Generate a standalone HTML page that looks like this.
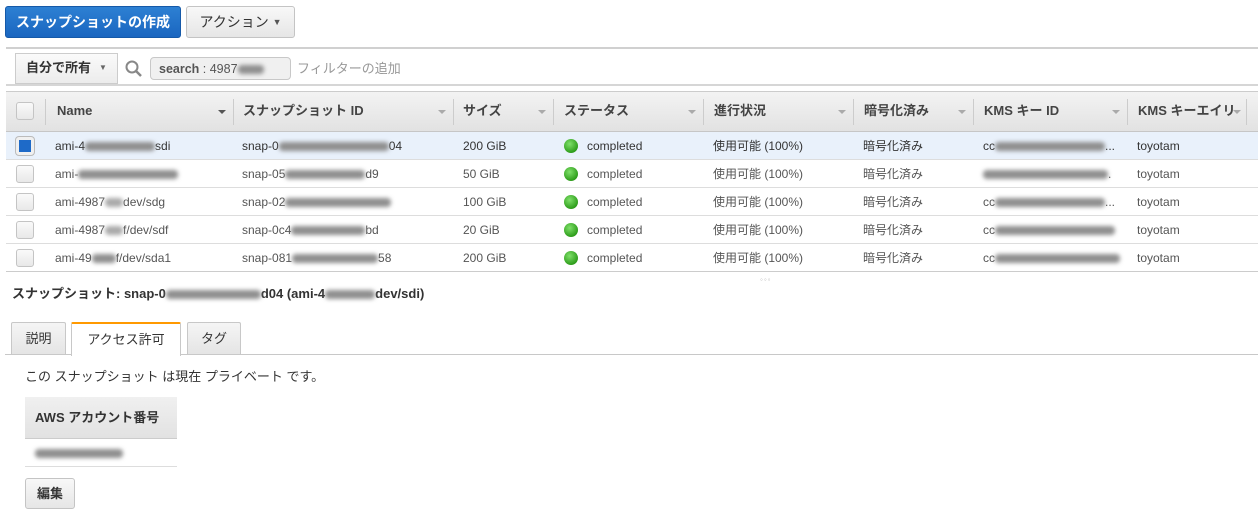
<!DOCTYPE html>
<html><head><meta charset="utf-8"><style>
*{box-sizing:border-box;margin:0;padding:0}
body{width:1258px;height:526px;background:#fff;font-family:"Liberation Sans","Noto Sans CJK JP",sans-serif;font-size:12px;color:#333;position:relative;overflow:hidden;line-height:16px}
.a{position:absolute;white-space:nowrap;height:16px;line-height:16px;display:flex;align-items:center}
.btn{position:absolute;border-radius:3px;font-weight:bold;font-size:13px;display:flex;align-items:center;justify-content:center;line-height:16px}
.blur{display:inline-block;height:9px;background:#8f8f8f;filter:blur(2.2px);border-radius:4px}
.hdr{position:absolute;left:6px;top:91px;width:1252px;height:41px;background:linear-gradient(#f3f3f3,#e2e2e2);border-top:1px solid #ccc;border-bottom:1px solid #c6c6c6}
.sep{position:absolute;top:99px;width:1px;height:26px;background:#ccc}
.ht{position:absolute;top:103px;height:16px;line-height:16px;display:flex;align-items:center;font-weight:bold;font-size:13px;color:#444;white-space:nowrap}
.tri{position:absolute;top:110px;width:0;height:0;border-left:4px solid transparent;border-right:4px solid transparent;border-top:4px solid #777}
.row{position:absolute;left:6px;width:1252px;height:28px;border-bottom:1px solid #ddd}
.cb{position:absolute;left:16px;width:18px;height:18px;border:1px solid #c4c4c4;border-radius:3px;background:linear-gradient(#fafafa,#e8e8e8)}
.dot{position:absolute;width:14px;height:14px;border-radius:50%;background:radial-gradient(circle at 40% 35%,#7fe06a,#2f9e1c 70%,#23810f)}
.tab{position:absolute;top:322px;height:33px;border:1px solid #c8c8c8;border-bottom:none;background:linear-gradient(#f5f5f5,#e4e4e4);font-size:13px;display:flex;align-items:center;justify-content:center;border-radius:2px 2px 0 0}
.g{color:#555}
</style></head><body>
<div class="btn" style="left:5px;top:6px;width:176px;height:32px;background:linear-gradient(#2d80d3,#1a66c0);border:1px solid #1559a8;color:#fff;font-size:14px">スナップショットの作成</div>
<div class="btn" style="left:186px;top:6px;width:109px;height:32px;background:linear-gradient(#f8f8f8,#e6e6e6);border:1px solid #c4c4c4;color:#333;font-weight:normal;font-size:14px">アクション&nbsp;<span style="font-size:9px;color:#555">▼</span></div>
<div class="a" style="left:6px;top:47px;width:1252px;height:2px;background:#d0d0d0"></div>
<div class="a" style="left:15px;top:53px;width:103px;height:31px;border:1px solid #ccc;background:linear-gradient(#fafafa,#ececec)"></div>
<div class="a" style="left:26px;top:60px;font-weight:bold;font-size:13px">自分で所有 <span style="font-size:8px;color:#666;margin-left:8px">▼</span></div>
<svg class="a" style="left:124px;top:59px;height:20px" width="20" height="20" viewBox="0 0 20 20"><circle cx="8" cy="8" r="5.5" fill="none" stroke="#888" stroke-width="2"/><line x1="12" y1="12" x2="17" y2="17" stroke="#888" stroke-width="2.5"/></svg>
<div class="a" style="left:150px;top:57px;width:141px;height:23px;border:1px solid #c8c8c8;border-radius:4px;background:#f0f0f0"></div>
<div class="a" style="left:159px;top:61px;font-weight:bold;color:#555;font-size:12.5px">search&nbsp;<span style="font-weight:normal">: 4987</span><span class="blur" style="width:26px"></span></div>
<div class="a" style="left:297px;top:61px;color:#999;font-size:13px">フィルターの追加</div>
<div class="a" style="left:6px;top:84px;width:1252px;height:2px;background:#d6d6d6"></div>
<div class="hdr"></div>
<div class="cb" style="top:102px"></div>
<div class="sep" style="left:45px"></div><div class="sep" style="left:233px"></div><div class="sep" style="left:453px"></div><div class="sep" style="left:553px"></div><div class="sep" style="left:703px"></div><div class="sep" style="left:853px"></div><div class="sep" style="left:973px"></div><div class="sep" style="left:1127px"></div><div class="sep" style="left:1246px"></div>
<div class="ht" style="left:57px">Name</div><div class="ht" style="left:243px">スナップショット ID</div><div class="ht" style="left:463px">サイズ</div><div class="ht" style="left:564px">ステータス</div><div class="ht" style="left:714px">進行状況</div><div class="ht" style="left:864px">暗号化済み</div><div class="ht" style="left:984px">KMS キー ID</div><div class="ht" style="left:1138px">KMS キーエイリ</div>
<div class="tri" style="left:218px;border-top-color:#555"></div><div class="tri" style="left:438px;border-top-color:#aaa"></div><div class="tri" style="left:538px;border-top-color:#aaa"></div><div class="tri" style="left:688px;border-top-color:#aaa"></div><div class="tri" style="left:838px;border-top-color:#aaa"></div><div class="tri" style="left:958px;border-top-color:#aaa"></div><div class="tri" style="left:1112px;border-top-color:#aaa"></div><div class="tri" style="left:1233px;border-top-color:#aaa"></div>

<div class="row" style="top:132px;background:#e9f1fb"></div>
<div class="row" style="top:160px"></div>
<div class="row" style="top:188px"></div>
<div class="row" style="top:216px"></div>
<div class="row" style="top:244px;border-bottom:1px solid #ccc"></div>

<div class="cb" style="top:137px;background:#1e6ac8;border:3px solid #f0f0f0;box-shadow:0 0 0 1px #bbb"></div>
<div class="cb" style="top:165px"></div><div class="cb" style="top:193px"></div><div class="cb" style="top:221px"></div><div class="cb" style="top:249px"></div>

<div class="a" style="left:55px;top:138px">ami-4<span class="blur" style="width:70px"></span>sdi</div>
<div class="a g" style="left:55px;top:166px">ami-<span class="blur" style="width:100px"></span></div>
<div class="a g" style="left:55px;top:194px">ami-4987<span class="blur" style="width:18px;background:#aaa"></span>dev/sdg</div>
<div class="a g" style="left:55px;top:222px">ami-4987<span class="blur" style="width:18px;background:#aaa"></span>f/dev/sdf</div>
<div class="a g" style="left:55px;top:250px">ami-49<span class="blur" style="width:24px"></span>f/dev/sda1</div>

<div class="a" style="left:242px;top:138px">snap-0<span class="blur" style="width:110px"></span>04</div>
<div class="a g" style="left:242px;top:166px">snap-05<span class="blur" style="width:80px"></span>d9</div>
<div class="a g" style="left:242px;top:194px">snap-02<span class="blur" style="width:106px"></span></div>
<div class="a g" style="left:242px;top:222px">snap-0c4<span class="blur" style="width:74px"></span>bd</div>
<div class="a g" style="left:242px;top:250px">snap-081<span class="blur" style="width:86px"></span>58</div>

<div class="a" style="left:463px;top:138px">200 GiB</div><div class="a g" style="left:463px;top:166px">50 GiB</div><div class="a g" style="left:463px;top:194px">100 GiB</div><div class="a g" style="left:463px;top:222px">20 GiB</div><div class="a g" style="left:463px;top:250px">200 GiB</div>

<div class="dot" style="left:564px;top:139px"></div><div class="dot" style="left:564px;top:167px"></div><div class="dot" style="left:564px;top:195px"></div><div class="dot" style="left:564px;top:223px"></div><div class="dot" style="left:564px;top:251px"></div>
<div class="a" style="left:587px;top:138px">completed</div><div class="a g" style="left:587px;top:166px">completed</div><div class="a g" style="left:587px;top:194px">completed</div><div class="a g" style="left:587px;top:222px">completed</div><div class="a g" style="left:587px;top:250px">completed</div>

<div class="a" style="left:713px;top:138px">使用可能 (100%)</div><div class="a g" style="left:713px;top:166px">使用可能 (100%)</div><div class="a g" style="left:713px;top:194px">使用可能 (100%)</div><div class="a g" style="left:713px;top:222px">使用可能 (100%)</div><div class="a g" style="left:713px;top:250px">使用可能 (100%)</div>

<div class="a" style="left:863px;top:138px">暗号化済み</div><div class="a g" style="left:863px;top:166px">暗号化済み</div><div class="a g" style="left:863px;top:194px">暗号化済み</div><div class="a g" style="left:863px;top:222px">暗号化済み</div><div class="a g" style="left:863px;top:250px">暗号化済み</div>

<div class="a" style="left:983px;top:138px">cc<span class="blur" style="width:110px"></span>...</div>
<div class="a g" style="left:983px;top:166px"><span class="blur" style="width:125px"></span>.</div>
<div class="a g" style="left:983px;top:194px">cc<span class="blur" style="width:110px"></span>...</div>
<div class="a g" style="left:983px;top:222px">cc<span class="blur" style="width:120px"></span></div>
<div class="a g" style="left:983px;top:250px">cc<span class="blur" style="width:125px"></span></div>

<div class="a" style="left:1137px;top:138px">toyotam</div><div class="a g" style="left:1137px;top:166px">toyotam</div><div class="a g" style="left:1137px;top:194px">toyotam</div><div class="a g" style="left:1137px;top:222px">toyotam</div><div class="a g" style="left:1137px;top:250px">toyotam</div>

<div class="a" style="left:760px;top:272px;color:#bbb;font-size:8px;letter-spacing:1px">◦◦◦</div>

<div class="a" style="left:12px;top:286px;font-weight:bold;font-size:13px">スナップショット: snap-0<span class="blur" style="width:95px"></span>d04 (ami-4<span class="blur" style="width:50px"></span>dev/sdi)</div>

<div class="tab" style="left:11px;width:55px">説明</div>
<div class="tab" style="left:71px;width:110px;background:#fff;border-top:2px solid #f90;height:34px">アクセス許可</div>
<div class="tab" style="left:187px;width:54px">タグ</div>
<div class="a" style="left:5px;top:354px;width:1253px;height:1px;background:#c8c8c8"></div>
<div class="a" style="left:72px;top:354px;width:108px;height:1px;background:#fff"></div>

<div class="a" style="left:25px;top:369px;font-size:13px">この スナップショット は現在 プライベート です。</div>
<div class="a" style="left:25px;top:397px;width:152px;height:42px;background:linear-gradient(#f0f0f0,#e2e2e2);border-bottom:1px solid #ccc"></div>
<div class="a" style="left:35px;top:410px;font-weight:bold;font-size:13px">AWS アカウント番号</div>
<div class="a" style="left:35px;top:445px"><span class="blur" style="width:88px"></span></div>
<div class="a" style="left:25px;top:466px;width:152px;height:1px;background:#ddd"></div>
<div class="btn" style="left:25px;top:478px;width:50px;height:31px;background:linear-gradient(#f8f8f8,#e6e6e6);border:1px solid #c4c4c4;color:#333">編集</div>
</body></html>
